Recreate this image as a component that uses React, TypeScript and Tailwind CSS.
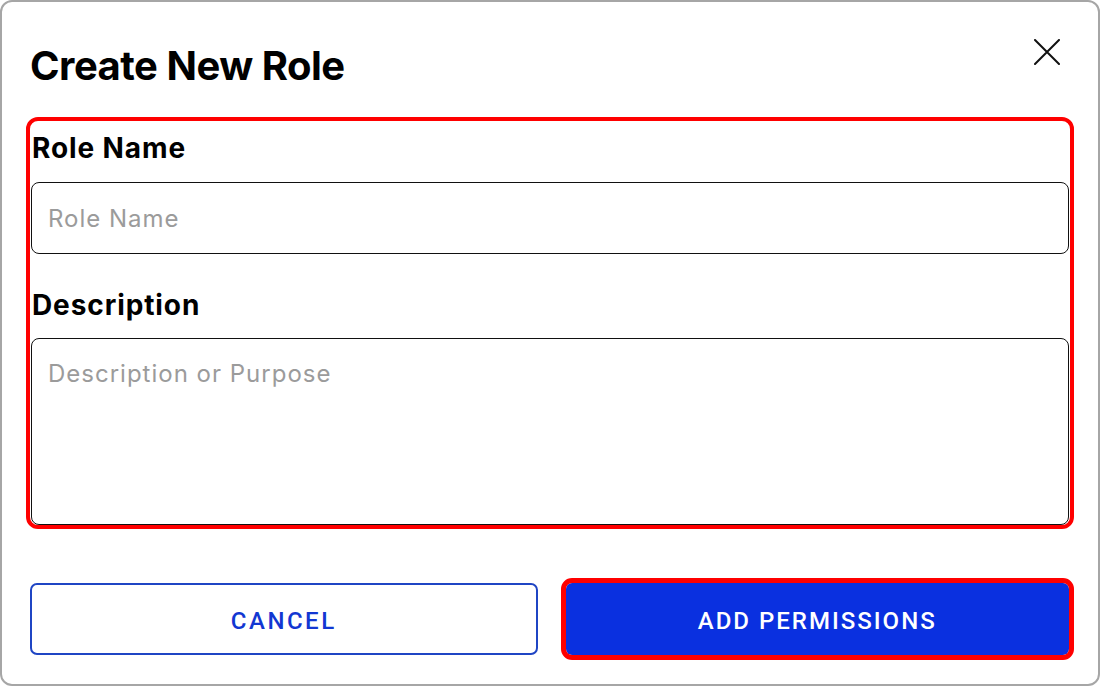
import { useState } from 'react';

const inter = { fontFamily: 'Inter, "Noto Sans", sans-serif' };
const roboto = { fontFamily: 'Roboto, "Noto Sans", sans-serif' };

function CloseIcon() {
  return (
    <svg width="26" height="26" viewBox="0 0 26 26" fill="none" stroke="#111" strokeWidth="2" strokeLinecap="round">
      <path d="M1 1L25 25M25 1L1 25" />
    </svg>
  );
}

export default function App() {
  const [roleName, setRoleName] = useState('');
  const [description, setDescription] = useState('');

  return (
    <div
      className="flex h-[686px] w-[1100px] flex-col rounded-[12px] border-2 border-[#a6a6a6] bg-white px-[24px]"
      style={inter}
    >
      {/* Header */}
      <div className="flex items-start justify-between pt-[40px]">
        <h1 className="ml-[4px] text-[40px] font-bold leading-[48px] tracking-[-0.5px] text-black">
          Create New Role
        </h1>
        <button type="button" aria-label="Close" className="mr-[14px] mt-[-3px]">
          <CloseIcon />
        </button>
      </div>

      {/* Form */}
      <div className="mt-[27px] flex flex-col rounded-[12px] border-4 border-[#ff0000] px-px pt-[10px]">
        <label className="ml-px text-[28px] font-bold leading-[34px] tracking-[0.9px] text-black">
          Role Name
        </label>
        <input
          value={roleName}
          onChange={(e) => setRoleName(e.target.value)}
          placeholder="Role Name"
          className="mt-[17px] h-[72px] w-full rounded-[8px] border-[1.5px] border-[#111] px-4 text-[24px] tracking-[1px] text-black outline-none placeholder:text-[#9b9b9b]"
        />
        <label className="ml-px mt-[34px] text-[28px] font-bold leading-[34px] tracking-[0.9px] text-black">
          Description
        </label>
        <textarea
          value={description}
          onChange={(e) => setDescription(e.target.value)}
          placeholder="Description or Purpose"
          className="mt-[16px] h-[187px] w-full resize-none rounded-[8px] border-[1.5px] border-[#111] px-4 pt-[20px] text-[24px] leading-[30px] tracking-[1px] text-black outline-none placeholder:text-[#9b9b9b]"
        />
      </div>

      {/* Actions */}
      <div className="mt-[54px] flex gap-[28px] pl-[4px] pr-[5px]" style={roboto}>
        <button
          type="button"
          className="h-[72px] flex-1 rounded-[7px] border-2 border-[#1f45c4] pt-[3px] text-[24px] font-medium tracking-[2.5px] text-[#1237d2]"
        >
          CANCEL
        </button>
        <button
          type="button"
          className="h-[72px] flex-1 rounded-[6px] bg-[#0a30e0] pt-[3px] text-[24px] font-medium tracking-[2px] text-white outline-[5px] outline-[#ff0000] outline-solid"
        >
          ADD PERMISSIONS
        </button>
      </div>
    </div>
  );
}
